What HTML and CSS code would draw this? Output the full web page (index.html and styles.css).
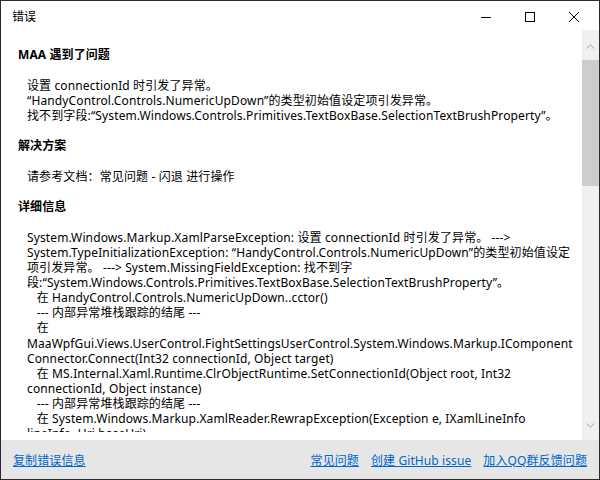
FILE: index.html
```html
<!DOCTYPE html>
<html lang="zh-CN">
<head>
<meta charset="utf-8">
<title>错误</title>
<link rel="stylesheet" href="styles.css">
</head>
<body>
<div class="window">
  <div class="titlebar">
    <span class="title">错误</span>
    <div class="caption-buttons">
      <span class="cap-btn"><svg width="10" height="10" viewBox="0 0 10 10"><path d="M0 5.5H10" stroke="#000" stroke-width="1" fill="none"/></svg></span>
      <span class="cap-btn"><svg width="10" height="10" viewBox="0 0 10 10"><rect x="0.5" y="0.5" width="9" height="9" stroke="#000" stroke-width="1" fill="none"/></svg></span>
      <span class="cap-btn"><svg width="10" height="10" viewBox="0 0 10 10"><path d="M0 0L10 10M10 0L0 10" stroke="#000" stroke-width="1" fill="none"/></svg></span>
    </div>
  </div>
  <div class="main">
    <div class="scroller">
      <div class="content">
        <h2 class="heading">MAA 遇到了问题</h2>
        <div class="para">设置 connectionId 时引发了异常。
“HandyControl.Controls.NumericUpDown”的类型初始值设定项引发异常。
找不到字段:“System.Windows.Controls.Primitives.TextBoxBase.SelectionTextBrushProperty”。</div>
        <h2 class="heading">解决方案</h2>
        <div class="para">请参考文档：常见问题 - 闪退 进行操作</div>
        <h2 class="heading">详细信息</h2>
        <div class="para">System.Windows.Markup.XamlParseException: 设置 connectionId 时引发了异常。 ---&gt;
System.TypeInitializationException: “HandyControl.Controls.NumericUpDown”的类型初始值设定
项引发异常。 ---&gt; System.MissingFieldException: 找不到字
段:“System.Windows.Controls.Primitives.TextBoxBase.SelectionTextBrushProperty”。
   在 HandyControl.Controls.NumericUpDown..cctor()
   --- 内部异常堆栈跟踪的结尾 ---
   在
MaaWpfGui.Views.UserControl.FightSettingsUserControl.System.Windows.Markup.IComponent
Connector.Connect(Int32 connectionId, Object target)
   在 MS.Internal.Xaml.Runtime.ClrObjectRuntime.SetConnectionId(Object root, Int32
connectionId, Object instance)
   --- 内部异常堆栈跟踪的结尾 ---
   在 System.Windows.Markup.XamlReader.RewrapException(Exception e, IXamlLineInfo
lineInfo, Uri baseUri)</div>
      </div>
    </div>
    <div class="scrollbar">
      <div class="sb-arrow"><svg width="9" height="5" viewBox="0 0 9 5"><path d="M0.5 4.5L4.5 0.8L8.5 4.5" stroke="#a6a6a6" stroke-width="1" fill="none"/></svg></div>
      <div class="sb-track"><div class="sb-thumb"></div></div>
      <div class="sb-arrow"><svg width="9" height="5" viewBox="0 0 9 5"><path d="M0.5 0.5L4.5 4.2L8.5 0.5" stroke="#a6a6a6" stroke-width="1" fill="none"/></svg></div>
    </div>
  </div>
  <div class="footer">
    <a class="link" href="#">复制错误信息</a>
    <div class="link-group">
      <a class="link" href="#">常见问题</a>
      <a class="link" href="#">创建 GitHub issue</a>
      <a class="link" href="#">加入QQ群反馈问题</a>
    </div>
  </div>
</div>
</body>
</html>
```
FILE: styles.css
```css
html, body {
  margin: 0;
  padding: 0;
  background: #ffffff;
}

body {
  font-family: "Noto Sans", "Noto Sans CJK SC", sans-serif;
  font-size: 12px;
  color: #000;
}

.window {
  width: 600px;
  height: 480px;
  box-sizing: border-box;
  border: 1px solid #2b2b2b;
  display: flex;
  flex-direction: column;
  background: #fff;
  overflow: hidden;
}

.titlebar {
  height: 29px;
  flex: none;
  display: flex;
  align-items: center;
  justify-content: space-between;
  padding-left: 11px;
}

.title {
  font-size: 12px;
  line-height: 15px;
  margin-top: 2px;
}

.caption-buttons {
  display: flex;
  height: 29px;
  padding-right: 3px;
}

.cap-btn {
  width: 44px;
  height: 29px;
  display: flex;
  align-items: center;
  justify-content: center;
  padding-top: 2px;
  box-sizing: border-box;
}

.main {
  flex: 1;
  display: flex;
  min-height: 0;
}

.scroller {
  flex: 1;
  min-width: 0;
  min-height: 0;
  padding-bottom: 8px;
  display: flex;
  flex-direction: column;
}

.content {
  flex: 1;
  min-height: 0;
  overflow: hidden;
  padding: 17px 0 0 17px;
}

.heading {
  margin: 0 0 16px 0;
  font-size: 12px;
  font-weight: bold;
  line-height: 15px;
  letter-spacing: 0.1px;
}

.para {
  margin: 0 0 15px 9px;
  white-space: pre;
  line-height: 15.05px;
  letter-spacing: 0.12px;
}

.scrollbar {
  width: 17px;
  flex: none;
  background: #f0f0f0;
  display: flex;
  flex-direction: column;
}

.sb-arrow {
  flex: none;
  display: flex;
  align-items: center;
  justify-content: center;
  box-sizing: border-box;
}

.scrollbar .sb-arrow:first-child {
  height: 30px;
  padding-top: 2px;
}

.scrollbar .sb-arrow:last-child {
  height: 30px;
}

.sb-track {
  flex: 1;
}

.sb-thumb {
  height: 126px;
  background: #cdcdcd;
}

.footer {
  height: 39px;
  flex: none;
  background: #e6e6e6;
  display: flex;
  align-items: center;
  justify-content: space-between;
  padding: 0 12px;
}

.link-group {
  display: flex;
  gap: 12px;
}

.link {
  color: #0066cc;
  text-decoration: underline;
  font-size: 12px;
  line-height: 15px;
  padding-top: 1px;
  letter-spacing: 0.1px;
}
```
